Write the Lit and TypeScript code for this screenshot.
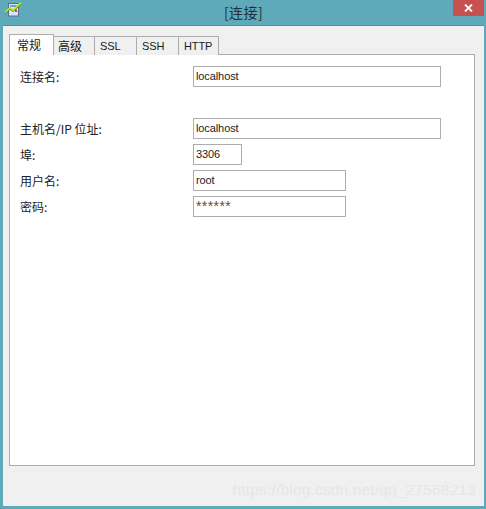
import { LitElement, html, css } from "lit";
import { customElement } from "lit/decorators.js";

@customElement("app-root")
export class AppRoot extends LitElement {
  static styles = css`
    :host { display: block; width: 486px; height: 509px; overflow: hidden; font-family: "Liberation Sans", "Noto Sans CJK SC", sans-serif; }
    .win { width: 486px; height: 509px; box-sizing: border-box; background: #5eaaba; display: flex; flex-direction: column; padding: 0 2px 3px 3px; position: relative; }
    .title { height: 25px; flex: none; display: flex; align-items: flex-start; position: relative; }
    .icon { margin: 1px 0 0 2px; }
    .caption { position: absolute; left: 0; right: 0; top: 3px; text-align: center; font-size: 14px; line-height: 18px; color: #233035; font-family: "Noto Sans CJK SC", sans-serif; letter-spacing: 0.4px; }
    .close { position: absolute; right: 0; top: 0; width: 31px; height: 16px; background: #c75050; display: flex; align-items: center; justify-content: center; }
    .body { flex: 1; background: #f0f0f0; border-top: 1px solid #4e919f; padding: 8px 9px 41px 6px; display: flex; flex-direction: column; box-sizing: border-box; }
    .tabs { display: flex; height: 20px; flex: none; position: relative; z-index: 1; }
    .tab { box-sizing: border-box; height: 19px; margin-top: 2px; border: 1px solid #adadad; border-bottom: 0; border-left: 0; background: #f0f0f0; font-size: 11px; line-height: 18px; color: #1a1a1a; padding-left: 5px; letter-spacing: -0.1px; }
    .tab.cjk { font-family: "Noto Sans CJK SC", sans-serif; font-size: 12px; letter-spacing: 0; padding-left: 4px; }
    .tab.on { margin-top: 0; height: 21px; border-left: 1px solid #adadad; background: #fff; padding-left: 7px; font-size: 12px; line-height: 19px; }
    .panel { flex: 1; background: #fff; border: 1px solid #adadad; box-sizing: border-box; padding: 11px 0 0 10px; display: flex; flex-direction: column; margin-bottom: -1px; }
    .row { display: flex; align-items: center; height: 21px; margin-bottom: 5px; }
    .row.gap { margin-bottom: 31px; }
    .label { width: 173px; flex: none; font-family: "Noto Sans CJK SC", sans-serif; font-size: 12px; color: #222; }
    .field { box-sizing: border-box; height: 21px; border: 1px solid #adadad; font-size: 11px; line-height: 18px; padding-left: 2px; color: #1c1c1c; background: #fff; letter-spacing: -0.1px; }
    .wide { width: 248px; } .port { width: 49px; } .mid { width: 153px; }
    .pw { color: #6b4a20; font-size: 14px; line-height: 18px; letter-spacing: 0.4px; }
    .mark { position: absolute; right: 10px; bottom: 10px; font-size: 15.5px; line-height: 18px; color: #e6e6e6; letter-spacing: 0.17px; font-family: "Liberation Sans", sans-serif; }
  `;

  render() {
    return html`<div class="win">
      <div class="title">
        <svg class="icon" width="18" height="17" viewBox="0 0 18 17">
          <rect x="3.5" y="2.5" width="10" height="12.5" fill="#dbe4f2" stroke="#5b6a9a"/>
          <rect x="5" y="4" width="7" height="2" fill="#7f9bc9"/>
          <rect x="5" y="8" width="7" height="1" fill="#9fb0cf"/>
          <path d="M0 11.5 L5 7 L8 9.5 L16 2" fill="none" stroke="#b5ef1f" stroke-width="2"/>
          <path d="M0 12.7 L5 8.2 L8 10.7 L16 3.2" fill="none" stroke="#2f7d1e" stroke-width="0.7"/>
          <rect x="10" y="9" width="2" height="2" fill="#d9423a"/>
        </svg>
        <div class="caption">[连接]</div>
        <div class="close">
          <svg width="9" height="8" viewBox="0 0 9 8"><path d="M1 0.5 L8 7.5 M8 0.5 L1 7.5" stroke="#fff" stroke-width="1.8"/></svg>
        </div>
      </div>
      <div class="body">
        <div class="tabs">
          <div class="tab on cjk" style="width:45px">常规</div>
          <div class="tab cjk" style="width:41px">高级</div>
          <div class="tab" style="width:42px">SSL</div>
          <div class="tab" style="width:42px">SSH</div>
          <div class="tab" style="width:40px">HTTP</div>
        </div>
        <div class="panel">
          <div class="row gap"><div class="label">连接名:</div><div class="field wide">localhost</div></div>
          <div class="row"><div class="label">主机名/IP 位址:</div><div class="field wide">localhost</div></div>
          <div class="row"><div class="label">埠:</div><div class="field port">3306</div></div>
          <div class="row"><div class="label">用户名:</div><div class="field mid">root</div></div>
          <div class="row"><div class="label">密码:</div><div class="field mid pw">******</div></div>
        </div>
      </div>
      <div class="mark">https://blog.csdn.net/qq_27568213</div>
    </div>`;
  }
}
